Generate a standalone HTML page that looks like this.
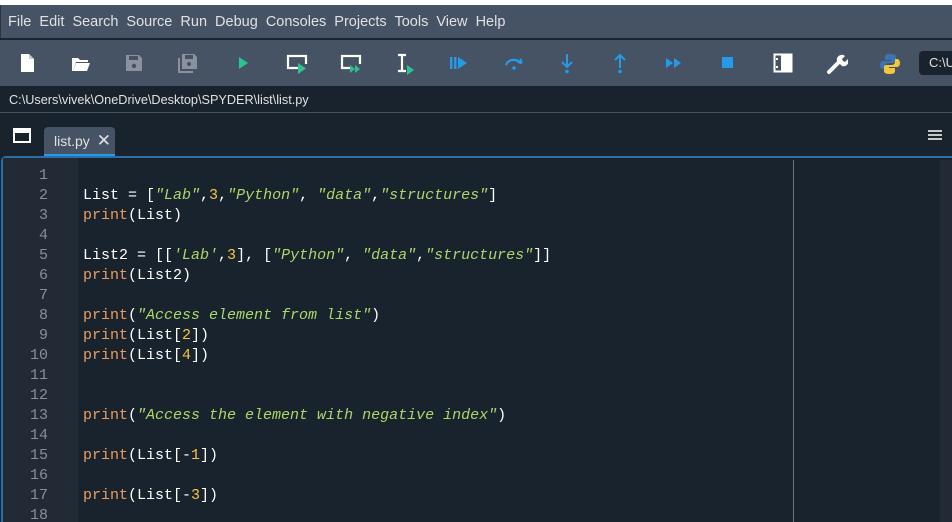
<!DOCTYPE html>
<html><head><style>
*{margin:0;padding:0;box-sizing:border-box}
html,body{width:952px;height:522px;overflow:hidden}
body{background:#19232d;font-family:"Liberation Sans",sans-serif;position:relative}
#top{position:absolute;left:0;top:0;width:952px;height:5px;background:#fff}
#menu{position:absolute;left:0;top:5px;width:952px;height:34px;background:#455364;border-left:1px solid #2b3540;border-bottom:1px solid #1c2630;color:#e0e1e3;font-size:14.5px;line-height:34px;padding-left:7px}
#menu span{margin-right:4px}
#tool{position:absolute;left:0;top:40px;width:952px;height:46px;background:#455364}
#tool svg{position:absolute;top:13px}
#pbox{position:absolute;left:919px;top:51px;width:33px;height:24px;background:#19232d;border-radius:4px 0 0 4px;color:#e0e1e3;font-size:13px;line-height:24px;padding-left:10px;overflow:hidden;white-space:nowrap}
#path{position:absolute;left:0;top:86px;width:952px;height:27px;color:#e0e1e3;font-size:12.7px;line-height:28px;padding-left:9px;border-bottom:1px solid #455364}
#tab{position:absolute;left:44px;top:127px;width:71px;height:30px;background:#455364;border-radius:4px 4px 0 0;border-bottom:3px solid #259ae9;color:#e0e1e3;font-size:14px;line-height:28px;padding-left:10px}
#ed{position:absolute;left:1px;top:156px;width:951px;height:366px;border-top:2px solid #2a6fa8;border-left:2px solid #2a6fa8;border-radius:5px 0 0 0;background:#19232d}
#gut{position:absolute;left:3px;top:158px;width:75px;height:364px;background:#222b35}
#edge{position:absolute;left:793px;top:160px;width:1px;height:362px;background:#6b7178}
#sb{position:absolute;left:940px;top:160px;width:12px;height:362px;background:#222a35}
.ln{position:absolute;width:48px;text-align:right;left:0;color:#8a8f94;font-family:"Liberation Mono",monospace;font-size:15px;line-height:20px}
.cd{position:absolute;left:83px;color:#fff;font-family:"Liberation Mono",monospace;font-size:15px;line-height:20px;white-space:pre}
.s{color:#a9d86b;font-style:italic}.n{color:#f6c443}.p{color:#ec9b5e}
</style></head><body>
<div id="top"></div>
<div id="menu"><span>File</span> <span>Edit</span> <span>Search</span> <span>Source</span> <span>Run</span> <span>Debug</span> <span>Consoles</span> <span>Projects</span> <span>Tools</span> <span>View</span> <span>Help</span></div>
<div id="tool">
<svg style="left:18px" width="18" height="20" viewBox="0 0 18 20"><path d="M3 1h8l5 5v13H3z" fill="#fff"/><path d="M11 1v5h5" fill="#ccc"/></svg>
<svg style="left:71px" width="20" height="20" viewBox="0 0 20 20"><path d="M1 5h6l2 2h8v2H5l-3 9H1z" fill="#fff"/><path d="M5 10h14l-3 8H2z" fill="#fff"/></svg>
<svg style="left:125px" width="18" height="20" viewBox="0 0 18 20"><path d="M1 2h13l3 3v13H1z" fill="#8a939d"/><rect x="4" y="3" width="9" height="4" fill="#455364"/><circle cx="9" cy="13" r="2.2" fill="#455364"/></svg>
<svg style="left:178px" width="20" height="20" viewBox="0 0 20 20"><path d="M1 5v14h14" stroke="#8a939d" stroke-width="2" fill="none"/><path d="M4 1h12l3 3v12H4z" fill="#8a939d"/><rect x="7" y="2" width="8" height="4" fill="#455364"/><circle cx="11" cy="11" r="2" fill="#455364"/></svg>
<svg style="left:236px" width="14" height="20" viewBox="0 0 14 20"><path d="M3 4l9 6-9 6z" fill="#2ec28e"/></svg>
<svg style="left:286px" width="22" height="22" viewBox="0 0 22 22"><path d="M12 15H2V3h18v8" stroke="#fff" stroke-width="2.2" fill="none"/><path d="M12 10l8 5.5-8 5.5z" fill="#2ec28e"/></svg>
<svg style="left:340px" width="22" height="22" viewBox="0 0 22 22"><path d="M10 15H2V3h18v8" stroke="#fff" stroke-width="2.2" fill="none"/><path d="M10 12l5 4-5 4zM15 12l5 4-5 4z" fill="#2ec28e"/></svg>
<svg style="left:396px" width="22" height="22" viewBox="0 0 22 22"><path d="M2 2h8M6 2v16M2 18h8" stroke="#fff" stroke-width="2.2" fill="none"/><path d="M11 12l7 5-7 5z" fill="#2ec28e"/></svg>
<svg style="left:448px" width="22" height="20" viewBox="0 0 22 20"><rect x="2" y="4" width="2.5" height="12" fill="#259ae9"/><rect x="6" y="4" width="2.5" height="12" fill="#259ae9"/><path d="M10 4l9 6-9 6z" fill="#259ae9"/></svg>
<svg style="left:503px" width="22" height="20" viewBox="0 0 22 20"><path d="M3 12a8 7 0 0 1 15-1" stroke="#259ae9" stroke-width="2.2" fill="none"/><path d="M14 10l6 0-2-5z" fill="#259ae9"/><circle cx="11" cy="15" r="1.8" fill="#259ae9"/></svg>
<svg style="left:558px" width="18" height="22" viewBox="0 0 18 22"><path d="M9 1v13M4 9l5 5 5-5" stroke="#259ae9" stroke-width="2" fill="none"/><circle cx="9" cy="18.5" r="1.8" fill="#259ae9"/></svg>
<svg style="left:611px" width="18" height="22" viewBox="0 0 18 22"><path d="M9 15V2M4 7l5-5 5 5" stroke="#259ae9" stroke-width="2" fill="none"/><circle cx="9" cy="18.5" r="1.8" fill="#259ae9"/></svg>
<svg style="left:665px" width="18" height="20" viewBox="0 0 18 20"><path d="M1 5l7 5-7 5zM9 5l7 5-7 5z" fill="#259ae9"/></svg>
<svg style="left:720px" width="16" height="20" viewBox="0 0 16 20"><rect x="2" y="4" width="11" height="11" fill="#259ae9"/></svg>
<svg style="left:773px" width="20" height="20" viewBox="0 0 20 20"><rect x="1.5" y="1.5" width="17" height="17" stroke="#fff" stroke-width="2" fill="none"/><rect x="8" y="2" width="10" height="16" fill="#fff"/><path d="M4 5v2M4 13v2" stroke="#fff" stroke-width="2"/></svg>
<svg style="left:826px" width="22" height="22" viewBox="0 0 22 22"><path d="M3 19L12 10" stroke="#fff" stroke-width="4" stroke-linecap="round"/><path d="M11 8a5 5 0 0 1 8-5l-3 3 1 2 2 1 3-3a5 5 0 0 1-6 7z" fill="#fff"/></svg>
<svg style="left:880px" width="20" height="22" viewBox="0 0 20 22"><path d="M10 1c-5 0-5 2-5 3v3h6v1H3c-2 0-3 2-3 4s1 4 3 4h2v-3c0-2 2-3 4-3h5c1 0 2-1 2-2V4c0-2-2-3-6-3z" fill="#3a75b0"/><path d="M10 21c5 0 5-2 5-3v-3H9v-1h8c2 0 3-2 3-4s-1-4-3-4h-2v3c0 2-2 3-4 3H6c-1 0-2 1-2 2v4c0 2 2 3 6 3z" fill="#f4c63b"/></svg>
</div>
<div id="pbox">C:\U</div>
<div id="path">C:\Users\vivek\OneDrive\Desktop\SPYDER\list\list.py</div>
<svg style="position:absolute;left:13px;top:128px" width="18" height="16" viewBox="0 0 18 16"><rect x="1" y="1" width="16" height="13" stroke="#fff" stroke-width="2" fill="none"/><rect x="1" y="1" width="16" height="4" fill="#fff"/></svg>
<div id="tab">list.py <span style="font-size:17px;margin-left:3px">✕</span></div>
<svg style="position:absolute;left:927px;top:129px" width="16" height="12"><path d="M1 2h14M1 6h14M1 10h14" stroke="#fff" stroke-width="1.6"/></svg>
<div id="ed"></div>
<div id="gut"></div>
<div id="edge"></div>
<div id="sb"></div>
<div style="position:absolute;left:0;top:166px;width:952px;height:356px;overflow:hidden">
<div class="ln" style="top:0">1</div><div class="ln" style="top:20px">2</div><div class="ln" style="top:40px">3</div><div class="ln" style="top:60px">4</div><div class="ln" style="top:80px">5</div><div class="ln" style="top:100px">6</div><div class="ln" style="top:120px">7</div><div class="ln" style="top:140px">8</div><div class="ln" style="top:160px">9</div><div class="ln" style="top:180px">10</div><div class="ln" style="top:200px">11</div><div class="ln" style="top:220px">12</div><div class="ln" style="top:240px">13</div><div class="ln" style="top:260px">14</div><div class="ln" style="top:280px">15</div><div class="ln" style="top:300px">16</div><div class="ln" style="top:320px">17</div><div class="ln" style="top:340px">18</div>
<div class="cd" style="top:20px">List = [<span class="s">"Lab"</span>,<span class="n">3</span>,<span class="s">"Python"</span>, <span class="s">"data"</span>,<span class="s">"structures"</span>]</div>
<div class="cd" style="top:40px"><span class="p">print</span>(List)</div>
<div class="cd" style="top:80px">List2 = [[<span class="s">'Lab'</span>,<span class="n">3</span>], [<span class="s">"Python"</span>, <span class="s">"data"</span>,<span class="s">"structures"</span>]]</div>
<div class="cd" style="top:100px"><span class="p">print</span>(List2)</div>
<div class="cd" style="top:140px"><span class="p">print</span>(<span class="s">"Access element from list"</span>)</div>
<div class="cd" style="top:160px"><span class="p">print</span>(List[<span class="n">2</span>])</div>
<div class="cd" style="top:180px"><span class="p">print</span>(List[<span class="n">4</span>])</div>
<div class="cd" style="top:240px"><span class="p">print</span>(<span class="s">"Access the element with negative index"</span>)</div>
<div class="cd" style="top:280px"><span class="p">print</span>(List[-<span class="n">1</span>])</div>
<div class="cd" style="top:320px"><span class="p">print</span>(List[-<span class="n">3</span>])</div>
</div>
</body></html>
